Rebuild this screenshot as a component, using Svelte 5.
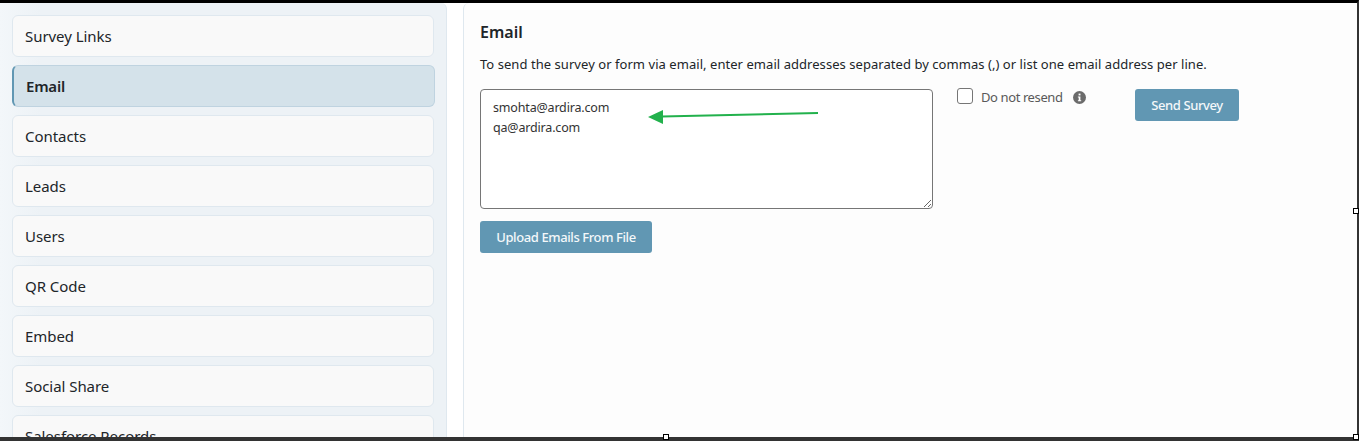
<script>
    const items = ['Survey Links', 'Email', 'Contacts', 'Leads', 'Users', 'QR Code', 'Embed', 'Social Share', 'Salesforce Records'];
    let active = 'Email';
    let emails = 'smohta@ardira.com\nqa@ardira.com';
</script>

<div class="frame">
    <div class="page">
        <aside>
            {#each items as item}
                <button class="item" class:active={item === active} on:click={() => (active = item)}>{item}</button>
            {/each}
        </aside>
        <main>
            <h2>Email</h2>
            <p>To send the survey or form via email, enter email addresses separated by commas (,) or list one email address per line.</p>
            <div class="row">
                <div class="left">
                    <div class="area">
                        <textarea bind:value={emails}></textarea>
                        <svg class="arrow" width="180" height="20" viewBox="0 0 180 20">
                            <path d="M170 4 L14 7.5" stroke="#22b14c" stroke-width="2" fill="none" />
                            <path d="M0 8 L15 1 L15 15 Z" fill="#22b14c" />
                        </svg>
                    </div>
                    <button class="btn upload">Upload Emails From File</button>
                </div>
                <label class="check">
                    <input type="checkbox" />
                    <span>Do not resend</span>
                    <svg class="info" width="13" height="13" viewBox="0 0 13 13">
                        <circle cx="6.5" cy="6.5" r="6.5" fill="#6b6b6b" />
                        <rect x="5.6" y="2.6" width="1.9" height="1.8" fill="#fff" />
                        <path d="M4.9 5.4 H7.4 V9.2 H8.2 V10.3 H4.9 V9.2 H5.7 V6.5 H4.9 Z" fill="#fff" />
                    </svg>
                </label>
                <button class="btn send">Send Survey</button>
            </div>
        </main>
    </div>
    <i class="handle right"></i>
    <i class="handle bottom"></i>
    <i class="handle corner"></i>
</div>

<style>
    :global(body) {
        margin: 0;
        background: #fff;
    }
    .frame {
        position: relative;
        box-sizing: border-box;
        height: 441px;
        border-top: 3px solid #000;
        border-right: 2px solid #333;
        border-bottom: 4px solid #333;
        font-family: 'Noto Sans', 'Open Sans', sans-serif;
        color: #212529;
    }
    .page {
        display: flex;
        height: 100%;
        overflow: hidden;
    }

    aside {
        box-sizing: border-box;
        width: 447px;
        flex: none;
        height: 100%;
        padding: 12px 12px 0;
        display: flex;
        flex-direction: column;
        gap: 8px;
        overflow: hidden;
        background: linear-gradient(90deg, #f3f7fa, #edf2f6 40px);
        border-right: 1px solid #dfe8ef;
        border-top-right-radius: 6px;
    }
    .item {
        flex: none;
        box-sizing: border-box;
        width: 100%;
        height: 42px;
        padding: 0 12px;
        text-align: left;
        font-family: inherit;
        font-size: 15px;
        letter-spacing: -0.05px;
        color: #212529;
        background: #f9f9f9;
        border: 1px solid #dfe8ef;
        border-radius: 6px;
    }
    .item.active {
        width: calc(100% + 1px);
        font-weight: 600;
        letter-spacing: -0.2px;
        background: #d4e2ea;
        border-color: #bfd3e0;
        border-left: 2px solid #6197b3;
    }

    main {
        flex: 1;
        margin-left: 16px;
        padding: 17px 16px 0;
        background: #fdfdfd;
        border-left: 1px solid #dfe8ef;
        border-top-left-radius: 6px;
    }
    h2 {
        margin: 0;
        font-size: 16px;
        line-height: 24px;
        font-weight: 600;
        color: #212529;
    }
    p {
        margin: 10px 0 0;
        font-size: 13px;
        line-height: 20px;
        letter-spacing: 0.05px;
    }

    .row {
        display: flex;
        align-items: flex-start;
        margin-top: 15px;
    }
    .left {
        width: 453px;
        flex: none;
    }
    .area {
        position: relative;
    }
    textarea {
        display: block;
        box-sizing: border-box;
        width: 100%;
        height: 120px;
        padding: 8px 12px;
        font-family: inherit;
        font-size: 12.5px;
        line-height: 20px;
        letter-spacing: -0.17px;
        color: #333;
        background: #fff;
        border: 1px solid #767676;
        border-radius: 4px;
        outline: none;
    }
    .arrow {
        position: absolute;
        left: 168px;
        top: 20px;
        pointer-events: none;
    }

    .btn {
        box-sizing: border-box;
        height: 32px;
        padding: 0;
        font-family: inherit;
        font-size: 13px;
        font-weight: 500;
        letter-spacing: -0.4px;
        color: #f4f8fa;
        background: #6197b3;
        border: 0;
        border-radius: 3px;
    }
    .upload {
        display: block;
        width: 172px;
        margin-top: 12px;
    }
    .send {
        width: 104px;
        margin-left: 25px;
    }

    .check {
        display: flex;
        align-items: center;
        height: 16px;
        width: 153px;
        margin: -1px 0 0 24px;
        font-size: 13px;
        letter-spacing: -0.4px;
        color: #595959;
    }
    .check span {
        margin-top: 2px;
    }
    .check input {
        appearance: none;
        box-sizing: border-box;
        width: 16px;
        height: 16px;
        margin: 0 8px 0 0;
        background: #fff;
        border: 1px solid #767676;
        border-radius: 3px;
    }
    .info {
        margin: 2px 0 0 10px;
    }

    .handle {
        position: absolute;
        box-sizing: border-box;
        width: 6px;
        height: 6px;
        background: #fff;
        border: 1px solid #000;
    }
    .right {
        right: -2px;
        top: 205px;
    }
    .bottom {
        left: 663px;
        bottom: -3px;
    }
    .corner {
        right: -2px;
        bottom: -3px;
    }
</style>
